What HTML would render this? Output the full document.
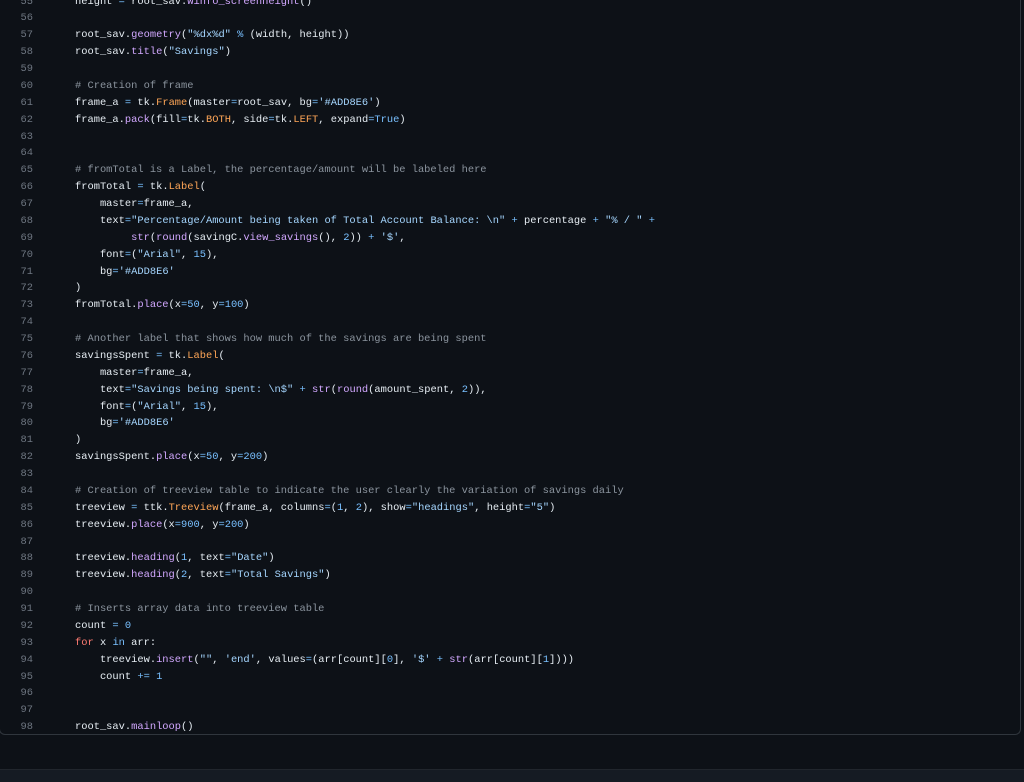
<!DOCTYPE html>
<html><head><meta charset="utf-8"><style>
html,body{margin:0;padding:0;background:#0d1117;width:1024px;height:781px;overflow:hidden}
.box{position:absolute;left:-1px;top:-10px;width:1022px;height:745px;border:1px solid #30363d;border-top:none;border-radius:0 0 6px 6px;box-sizing:border-box}
.code{position:absolute;left:0;top:-6.5px;font-family:"Liberation Mono",monospace;font-size:10.4px;line-height:16.88px;color:#e6edf3}
.l{display:block;height:16.88px;white-space:pre}
.n{display:inline-block;width:33px;text-align:right;color:#6e7681;margin-right:42px}
.c{color:#8b949e}.f{color:#d2a8ff}.s{color:#a5d6ff}.k{color:#ff7b72}.o{color:#ffa657}.b{color:#79c0ff}
.foot{position:absolute;left:0;top:769px;width:1024px;height:12px;background:#151b23;border-top:1px solid #21262d}
</style></head><body>
<div class="box"></div>
<div class="code">
<span class="l"><span class="n">55</span>height <span class="b">=</span> root_sav.<span class="f">winfo_screenheight</span>()</span>
<span class="l"><span class="n">56</span></span>
<span class="l"><span class="n">57</span>root_sav.<span class="f">geometry</span>(<span class="s">"%dx%d"</span> <span class="b">%</span> (width, height))</span>
<span class="l"><span class="n">58</span>root_sav.<span class="f">title</span>(<span class="s">"Savings"</span>)</span>
<span class="l"><span class="n">59</span></span>
<span class="l"><span class="n">60</span><span class="c"># Creation of frame</span></span>
<span class="l"><span class="n">61</span>frame_a <span class="b">=</span> tk.<span class="o">Frame</span>(master<span class="b">=</span>root_sav, bg<span class="b">=</span><span class="s">'#ADD8E6'</span>)</span>
<span class="l"><span class="n">62</span>frame_a.<span class="f">pack</span>(fill<span class="b">=</span>tk.<span class="o">BOTH</span>, side<span class="b">=</span>tk.<span class="o">LEFT</span>, expand<span class="b">=True</span>)</span>
<span class="l"><span class="n">63</span></span>
<span class="l"><span class="n">64</span></span>
<span class="l"><span class="n">65</span><span class="c"># fromTotal is a Label, the percentage/amount will be labeled here</span></span>
<span class="l"><span class="n">66</span>fromTotal <span class="b">=</span> tk.<span class="o">Label</span>(</span>
<span class="l"><span class="n">67</span>    master<span class="b">=</span>frame_a,</span>
<span class="l"><span class="n">68</span>    text<span class="b">=</span><span class="s">"Percentage/Amount being taken of Total Account Balance: \n"</span> <span class="b">+</span> percentage <span class="b">+</span> <span class="s">"% / "</span> <span class="b">+</span></span>
<span class="l"><span class="n">69</span>         <span class="f">str</span>(<span class="f">round</span>(savingC.<span class="f">view_savings</span>(), <span class="b">2</span>)) <span class="b">+</span> <span class="s">'$'</span>,</span>
<span class="l"><span class="n">70</span>    font<span class="b">=</span>(<span class="s">"Arial"</span>, <span class="b">15</span>),</span>
<span class="l"><span class="n">71</span>    bg<span class="b">=</span><span class="s">'#ADD8E6'</span></span>
<span class="l"><span class="n">72</span>)</span>
<span class="l"><span class="n">73</span>fromTotal.<span class="f">place</span>(x<span class="b">=50</span>, y<span class="b">=100</span>)</span>
<span class="l"><span class="n">74</span></span>
<span class="l"><span class="n">75</span><span class="c"># Another label that shows how much of the savings are being spent</span></span>
<span class="l"><span class="n">76</span>savingsSpent <span class="b">=</span> tk.<span class="o">Label</span>(</span>
<span class="l"><span class="n">77</span>    master<span class="b">=</span>frame_a,</span>
<span class="l"><span class="n">78</span>    text<span class="b">=</span><span class="s">"Savings being spent: \n$"</span> <span class="b">+</span> <span class="f">str</span>(<span class="f">round</span>(amount_spent, <span class="b">2</span>)),</span>
<span class="l"><span class="n">79</span>    font<span class="b">=</span>(<span class="s">"Arial"</span>, <span class="b">15</span>),</span>
<span class="l"><span class="n">80</span>    bg<span class="b">=</span><span class="s">'#ADD8E6'</span></span>
<span class="l"><span class="n">81</span>)</span>
<span class="l"><span class="n">82</span>savingsSpent.<span class="f">place</span>(x<span class="b">=50</span>, y<span class="b">=200</span>)</span>
<span class="l"><span class="n">83</span></span>
<span class="l"><span class="n">84</span><span class="c"># Creation of treeview table to indicate the user clearly the variation of savings daily</span></span>
<span class="l"><span class="n">85</span>treeview <span class="b">=</span> ttk.<span class="o">Treeview</span>(frame_a, columns<span class="b">=</span>(<span class="b">1</span>, <span class="b">2</span>), show<span class="b">=</span><span class="s">"headings"</span>, height<span class="b">=</span><span class="s">"5"</span>)</span>
<span class="l"><span class="n">86</span>treeview.<span class="f">place</span>(x<span class="b">=900</span>, y<span class="b">=200</span>)</span>
<span class="l"><span class="n">87</span></span>
<span class="l"><span class="n">88</span>treeview.<span class="f">heading</span>(<span class="b">1</span>, text<span class="b">=</span><span class="s">"Date"</span>)</span>
<span class="l"><span class="n">89</span>treeview.<span class="f">heading</span>(<span class="b">2</span>, text<span class="b">=</span><span class="s">"Total Savings"</span>)</span>
<span class="l"><span class="n">90</span></span>
<span class="l"><span class="n">91</span><span class="c"># Inserts array data into treeview table</span></span>
<span class="l"><span class="n">92</span>count <span class="b">= 0</span></span>
<span class="l"><span class="n">93</span><span class="k">for</span> x <span class="b">in</span> arr:</span>
<span class="l"><span class="n">94</span>    treeview.<span class="f">insert</span>(<span class="s">""</span>, <span class="s">'end'</span>, values<span class="b">=</span>(arr[count][<span class="b">0</span>], <span class="s">'$'</span> <span class="b">+</span> <span class="f">str</span>(arr[count][<span class="b">1</span>])))</span>
<span class="l"><span class="n">95</span>    count <span class="b">+= 1</span></span>
<span class="l"><span class="n">96</span></span>
<span class="l"><span class="n">97</span></span>
<span class="l"><span class="n">98</span>root_sav.<span class="f">mainloop</span>()</span>
</div>
<div class="foot"></div>
</body></html>
